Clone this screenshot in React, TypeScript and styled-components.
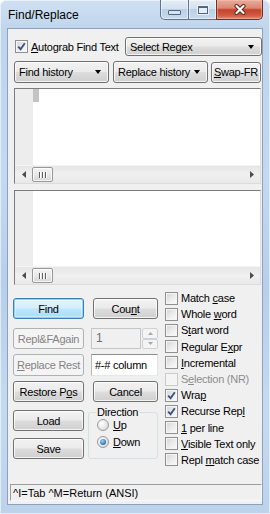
import React from "react";
import styled, { createGlobalStyle, css } from "styled-components";

const GlobalStyle = createGlobalStyle`
  html, body {
    margin: 0;
    padding: 0;
    background: #ffffff;
  }
`;

// Win32 style captions: "&x" underlines x, "&&" is a literal ampersand
const Caption: React.FC<{ text: string }> = ({ text }) => {
  const parts: React.ReactNode[] = [];
  let buf = "";
  for (let i = 0; i < text.length; i++) {
    const c = text[i];
    if (c === "&" && text[i + 1] === "&") {
      buf += "&";
      i++;
    } else if (c === "&" && i + 1 < text.length) {
      parts.push(buf);
      buf = "";
      parts.push(<Key key={i}>{text[i + 1]}</Key>);
      i++;
    } else {
      buf += c;
    }
  }
  parts.push(buf);
  return <>{parts}</>;
};

const options = [
  { text: "Match &case" },
  { text: "Whole &word" },
  { text: "S&tart word" },
  { text: "Regular E&xpr" },
  { text: "&Incremental" },
  { text: "S&election (NR)", disabled: true },
  { text: "Wra&p", checked: true },
  { text: "Recurse Rep&l", checked: true },
  { text: "&1 per line" },
  { text: "&Visible Text only" },
  { text: "Repl &match case" },
];

const CheckMark = () => (
  <svg width="9" height="9" viewBox="0 0 9 9">
    <path d="M1.2 4.6 L3.6 7.2 L7.8 1.2" fill="none" stroke="#3b5283" strokeWidth="1.9" />
  </svg>
);

const CheckBox: React.FC<{ checked?: boolean; disabled?: boolean }> = ({ checked, disabled }) => (
  <Box $disabled={disabled}>{checked && <CheckMark />}</Box>
);

const Editor: React.FC<{ height: number; caret?: boolean }> = ({ height, caret }) => (
  <EditFrame $h={height}>
    <EditBody>
      <Gutter />
      <TextArea>{caret && <Caret />}</TextArea>
    </EditBody>
    <HScroll>
      <ScrollArrow>
        <svg width="4" height="7" viewBox="0 0 4 7">
          <path d="M4 0 L0 3.5 L4 7 Z" fill="#4d4d4d" />
        </svg>
      </ScrollArrow>
      <Thumb>
        <Grip />
        <Grip />
        <Grip />
      </Thumb>
      <ScrollArrow>
        <svg width="4" height="7" viewBox="0 0 4 7">
          <path d="M0 0 L4 3.5 L0 7 Z" fill="#4d4d4d" />
        </svg>
      </ScrollArrow>
    </HScroll>
  </EditFrame>
);

const App: React.FC = () => {
  return (
    <>
      <GlobalStyle />
      <Window>
        <TitleBar>
          <Title>Find/Replace</Title>
          <CaptionBar>
            <CaptionButton $kind="min">
              <MinGlyph />
            </CaptionButton>
            <CaptionButton $kind="max">
              <MaxGlyph />
            </CaptionButton>
            <CaptionButton $kind="close">
              <svg width="14" height="11" viewBox="0 0 14 11">
                <path d="M3.5 2 L10.5 9 M10.5 2 L3.5 9" stroke="#5a2216" strokeWidth="4" strokeLinecap="round" />
                <path d="M3.5 2 L10.5 9 M10.5 2 L3.5 9" stroke="#ffffff" strokeWidth="2.2" strokeLinecap="round" />
              </svg>
            </CaptionButton>
          </CaptionBar>
        </TitleBar>

        <Client>
          <TopRow>
            <CheckRow>
              <CheckBox checked />
              <span>
                <Caption text="&Autograb Find Text" />
              </span>
            </CheckRow>
            <Combo $w={137}>
              <span>Select Regex</span>
              <DropArrow />
            </Combo>
          </TopRow>

          <HistoryRow>
            <Combo $w={95}>
              <span>Find history</span>
              <DropArrow />
            </Combo>
            <Combo $w={95}>
              <span>Replace history</span>
              <DropArrow />
            </Combo>
            <Button $w={50}>
              <Caption text="&Swap-FR" />
            </Button>
          </HistoryRow>

          <EditorSlot $top={5}>
            <Editor height={96} caret />
          </EditorSlot>
          <EditorSlot $top={6}>
            <Editor height={95} />
          </EditorSlot>

          <Lower>
            <ButtonGrid>
              <Button $default>Find</Button>
              <Button $offset={2}>
                <Caption text="Cou&nt" />
              </Button>

              <Button disabled>
                <Caption text="Repl&&FA&gain" />
              </Button>
              <SpinRow>
                <SpinEdit>1</SpinEdit>
                <Spinner>
                  <SpinHalf>
                    <svg width="5" height="3" viewBox="0 0 5 3">
                      <path d="M0 3 L2.5 0 L5 3 Z" fill="#a7a7a7" />
                    </svg>
                  </SpinHalf>
                  <SpinHalf>
                    <svg width="5" height="3" viewBox="0 0 5 3">
                      <path d="M0 0 L2.5 3 L5 0 Z" fill="#a7a7a7" />
                    </svg>
                  </SpinHalf>
                </Spinner>
              </SpinRow>

              <Button disabled $h={22}>
                <Caption text="&Replace Rest" />
              </Button>
              <TextField>#-# column</TextField>

              <Button>
                <Caption text="Restore P&os" />
              </Button>
              <Button $offset={2}>Cancel</Button>

              <Button $top={4}>Load</Button>
              <Direction>
                <legend>Direction</legend>
                <RadioRow>
                  <Radio />
                  <span>
                    <Caption text="&Up" />
                  </span>
                </RadioRow>
                <RadioRow>
                  <Radio $on />
                  <span>
                    <Caption text="&Down" />
                  </span>
                </RadioRow>
              </Direction>

              <Button>Save</Button>
            </ButtonGrid>

            <CheckList>
              {options.map((o) => (
                <CheckRow key={o.text} $disabled={o.disabled}>
                  <CheckBox checked={o.checked} disabled={o.disabled} />
                  <span>
                    <Caption text={o.text} />
                  </span>
                </CheckRow>
              ))}
            </CheckList>
          </Lower>

          <StatusBar>^I=Tab ^M=Return (ANSI)</StatusBar>
        </Client>
      </Window>
    </>
  );
};

const Key = styled.span`
  text-decoration: underline;
  text-underline-offset: 1px;
`;

const Window = styled.div`
  width: 270px;
  height: 514px;
  box-sizing: border-box;
  display: flex;
  flex-direction: column;
  padding: 0 7px 9px 7px;
  border-radius: 6px 6px 0 0;
  background: linear-gradient(
    180deg,
    #cfe0f2 0%,
    #bfd5ec 6%,
    #c4d9ef 35%,
    #b7cfe9 55%,
    #c6daef 80%,
    #bcd3eb 100%
  );
  box-shadow: inset 0 0 0 1px rgba(255, 255, 255, 0.55);
  font-family: "Liberation Sans", Arial, sans-serif;
  font-size: 11px;
  letter-spacing: -0.25px;
  color: #000;
`;

const TitleBar = styled.div`
  height: 28px;
  flex: none;
  display: flex;
  justify-content: space-between;
  align-items: flex-start;
`;

const Title = styled.div`
  padding: 8px 0 0 1px;
  font-size: 12px;
  letter-spacing: 0;
  color: #000;
`;

const CaptionBar = styled.div`
  display: flex;
`;

const CaptionButton = styled.div<{ $kind: "min" | "max" | "close" }>`
  height: 20px;
  box-sizing: border-box;
  display: flex;
  align-items: center;
  justify-content: center;
  border: 1px solid #5c7390;
  border-top: none;
  box-shadow: inset 0 0 0 1px rgba(255, 255, 255, 0.5);
  background: linear-gradient(180deg, #e4edf7 0%, #d4e1ef 45%, #bccfe4 50%, #c8daec 100%);

  & + & {
    margin-left: -1px;
  }

  ${(p) =>
    p.$kind === "min" &&
    css`
      width: 29px;
      border-radius: 0 0 0 5px;
    `}
  ${(p) =>
    p.$kind === "max" &&
    css`
      width: 29px;
    `}
  ${(p) =>
    p.$kind === "close" &&
    css`
      width: 47px;
      border-color: #6e2e22;
      border-radius: 0 0 5px 0;
      box-shadow: inset 0 0 0 1px rgba(255, 200, 190, 0.45);
      background: linear-gradient(180deg, #e9ac9b 0%, #d98873 42%, #c4432b 52%, #cf5a3e 80%, #e08b72 100%);
    `}
`;

const MinGlyph = styled.span`
  width: 11px;
  height: 3px;
  margin-top: 5px;
  background: #d7e3f1;
  border: 1px solid #4f6684;
  border-radius: 1px;
`;

const MaxGlyph = styled.span`
  width: 8px;
  height: 5px;
  background: #e6eef7;
  border: 1px solid #4f6684;
  border-top-width: 2px;
  box-shadow: 0 0 0 1px rgba(255, 255, 255, 0.6);
`;

const Client = styled.div`
  flex: 1;
  display: flex;
  flex-direction: column;
  background: #f0f0f0;
  border: 1px solid #8da2ba;
`;

const TopRow = styled.div`
  display: flex;
  align-items: center;
  justify-content: space-between;
  margin-top: 8px;
  padding: 0 0 0 7px;
  height: 19px;
`;

const HistoryRow = styled.div`
  display: flex;
  align-items: center;
  margin-top: 5px;
  padding: 0 1px 0 6px;
  height: 22px;
  gap: 4px;

  & > :last-child {
    margin-left: -1px;
  }
`;

const controlFace = css`
  box-sizing: border-box;
  border: 1px solid #707070;
  border-radius: 3px;
  background: linear-gradient(180deg, #f2f2f2 0%, #ebebeb 48%, #dddddd 52%, #cfcfcf 100%);
  box-shadow: inset 0 0 0 1px rgba(255, 255, 255, 0.75);
`;

const Combo = styled.div<{ $w: number }>`
  ${controlFace}
  width: ${(p) => p.$w}px;
  height: 100%;
  display: flex;
  align-items: center;
  justify-content: space-between;
  padding: 0 7px 0 4px;
  white-space: nowrap;
`;

const DropArrow = styled.span`
  width: 0;
  height: 0;
  border-left: 3.5px solid transparent;
  border-right: 3.5px solid transparent;
  border-top: 4px solid #000;
`;

const Button = styled.button<{ $default?: boolean; $w?: number; $h?: number; $offset?: number; $top?: number }>`
  ${controlFace}
  font: inherit;
  letter-spacing: inherit;
  color: #000;
  padding: 0;
  width: ${(p) => (p.$w ? `${p.$w}px` : "auto")};
  height: ${(p) => p.$h ?? 21}px;
  margin-left: ${(p) => p.$offset ?? 0}px;
  margin-top: ${(p) => p.$top ?? 0}px;
  white-space: nowrap;

  ${(p) =>
    p.$default &&
    css`
      border-color: #3c7fb1;
      background: linear-gradient(180deg, #e3f4fc 0%, #d4eefb 48%, #bee6fd 52%, #a9dbf6 100%);
      box-shadow: inset 0 0 0 1px #8fd5f7, inset 0 0 0 2px rgba(255, 255, 255, 0.35);
    `}

  &:disabled {
    border-color: #adb2b5;
    background: #f4f4f4;
    box-shadow: none;
    color: #838383;
  }
`;

const EditorSlot = styled.div<{ $top: number }>`
  margin: ${(p) => p.$top}px 1px 0 6px;
`;

const EditFrame = styled.div<{ $h: number }>`
  height: ${(p) => p.$h}px;
  box-sizing: border-box;
  display: flex;
  flex-direction: column;
  background: #ffffff;
  border: 1px solid;
  border-color: #7c7c7c #dcdcdc #dcdcdc #7c7c7c;
`;

const EditBody = styled.div`
  flex: 1;
  display: flex;
`;

const Gutter = styled.div`
  width: 18px;
  background: #ededed;
`;

const TextArea = styled.div`
  flex: 1;
  padding-top: 0;
`;

const Caret = styled.div`
  width: 6px;
  height: 13px;
  margin-left: 0;
  background: #c4c4c4;
`;

const HScroll = styled.div`
  height: 17px;
  display: flex;
  align-items: center;
  justify-content: space-between;
  background: linear-gradient(180deg, #e6e6e6 0%, #f0f0f0 50%, #e9e9e9 100%);
  border-top: 1px solid #f4f4f4;
`;

const ScrollArrow = styled.div`
  width: 17px;
  height: 17px;
  display: flex;
  align-items: center;
  justify-content: center;
`;

const Thumb = styled.div`
  width: 21px;
  height: 15px;
  box-sizing: border-box;
  margin-right: auto;
  display: flex;
  align-items: center;
  justify-content: center;
  gap: 2px;
  border: 1px solid #979797;
  border-radius: 2px;
  background: linear-gradient(180deg, #f4f4f4 0%, #e8e8e8 50%, #d6d6d6 100%);
  box-shadow: inset 0 0 0 1px rgba(255, 255, 255, 0.8);
`;

const Grip = styled.span`
  width: 1px;
  height: 6px;
  background: #5f5f5f;
  box-shadow: 1px 0 0 #ffffff;
`;

const Lower = styled.div`
  display: flex;
  margin-top: 5px;
`;

const ButtonGrid = styled.div`
  display: grid;
  grid-template-columns: 71px 67px;
  grid-template-rows: 30px 26px 27px 25px 32px 28px;
  column-gap: 7px;
  align-items: start;
  padding: 8px 0 0 5px;
`;

const SpinRow = styled.div`
  display: flex;
  height: 21px;
`;

const SpinEdit = styled.div`
  flex: 1;
  box-sizing: border-box;
  border: 1px solid #c4c7ca;
  background: #f0f0f0;
  color: #6d6d6d;
  padding: 2px 0 0 4px;
  font-size: 12px;
`;

const Spinner = styled.div`
  width: 16px;
  display: flex;
  flex-direction: column;
  margin-left: 1px;
`;

const SpinHalf = styled.div`
  flex: 1;
  display: flex;
  align-items: center;
  justify-content: center;
  border: 1px solid #cfd2d5;
  border-radius: 2px;
  background: #f4f4f4;
`;

const TextField = styled.div`
  height: 22px;
  box-sizing: border-box;
  border: 1px solid;
  border-color: #8b8b8b #e2e3ea #e3e9ef #b5b9c0;
  background: #ffffff;
  padding: 4px 0 0 3px;
  white-space: nowrap;
`;

const Direction = styled.fieldset`
  grid-row: span 2;
  height: 53px;
  box-sizing: border-box;
  margin: 0 0 0 -3px;
  padding: 0 0 0 8px;
  border: 1px solid #d5dfe5;
  border-radius: 3px;
  display: flex;
  flex-direction: column;
  gap: 4px;

  legend {
    padding: 0 1px;
    margin-left: -1px;
    line-height: 12px;
  }
`;

const RadioRow = styled.div`
  display: flex;
  align-items: center;
  gap: 4px;
  height: 13px;
`;

const Radio = styled.span<{ $on?: boolean }>`
  width: 12px;
  height: 12px;
  box-sizing: border-box;
  border-radius: 50%;
  border: 1px solid #9a9a9a;
  background: radial-gradient(circle at 35% 35%, #ffffff 0%, #e6e6e6 55%, #cfcfcf 100%);
  display: flex;
  align-items: center;
  justify-content: center;

  ${(p) =>
    p.$on &&
    css`
      &::after {
        content: "";
        width: 6px;
        height: 6px;
        border-radius: 50%;
        background: radial-gradient(circle at 40% 35%, #a8d4f4 0%, #3a87c8 55%, #1b5a96 100%);
      }
    `}
`;

const CheckList = styled.div`
  display: flex;
  flex-direction: column;
  padding-left: 7px;
`;

const CheckRow = styled.div<{ $disabled?: boolean }>`
  display: flex;
  align-items: center;
  gap: 3px;
  height: 16.2px;
  white-space: nowrap;
  color: ${(p) => (p.$disabled ? "#8d8d8d" : "#000")};
`;

const Box = styled.span<{ $disabled?: boolean }>`
  width: 13px;
  height: 13px;
  flex: none;
  box-sizing: border-box;
  display: flex;
  align-items: center;
  justify-content: center;
  border: 1px solid #8f8f8f;
  background: linear-gradient(135deg, #d2d2d2 0%, #ededed 55%, #fafafa 100%);
  box-shadow: inset 0 0 0 1px #f6f6f6;

  ${(p) =>
    p.$disabled &&
    css`
      border-color: #c9c9c9;
      background: #f4f4f4;
    `}
`;

const StatusBar = styled.div`
  margin: auto 0 3px 2px;
  height: 17px;
  box-sizing: border-box;
  border: 1px solid;
  border-color: #9d9d9d #f8f8f8 #f8f8f8 #9d9d9d;
  padding: 2px 0 0 2px;
  letter-spacing: 0;
  white-space: nowrap;
`;

export default App;
